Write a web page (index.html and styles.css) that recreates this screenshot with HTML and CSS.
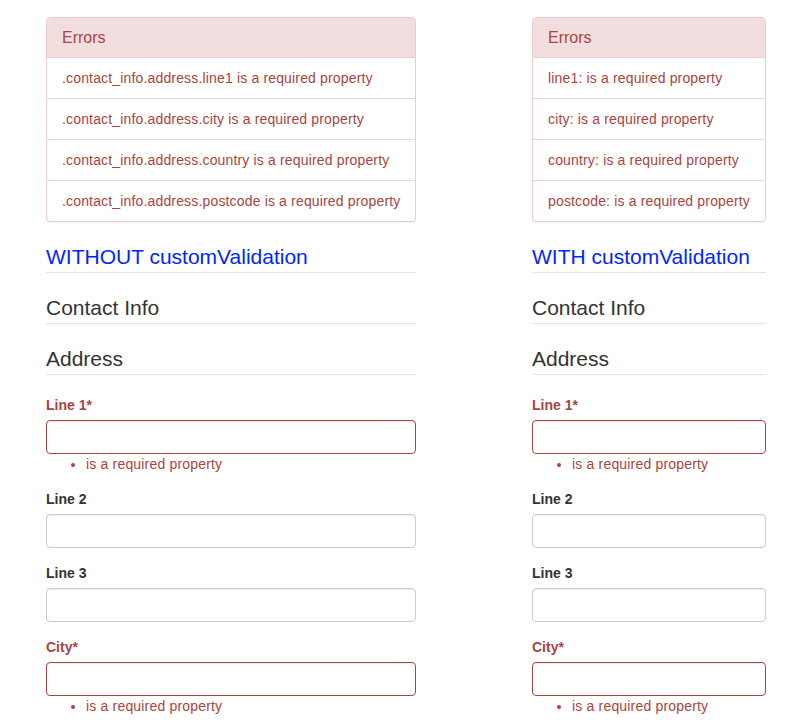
FILE: index.html
```html
<!DOCTYPE html>
<html>
<head>
<meta charset="utf-8">
<link rel="stylesheet" href="styles.css">
</head>
<body>
<div class="page">
  <div class="col col-left">
    <div class="panel">
      <div class="panel-heading">Errors</div>
      <ul class="list-group">
        <li class="list-group-item">.contact_info.address.line1 is a required property</li>
        <li class="list-group-item">.contact_info.address.city is a required property</li>
        <li class="list-group-item">.contact_info.address.country is a required property</li>
        <li class="list-group-item">.contact_info.address.postcode is a required property</li>
      </ul>
    </div>
    <div class="legend legend-blue">WITHOUT customValidation</div>
    <div class="legend">Contact Info</div>
    <div class="legend">Address</div>
    <div class="form-group has-error">
      <label class="control-label">Line 1*</label>
      <input class="form-control" type="text">
      <ul class="error-list"><li>is a required property</li></ul>
    </div>
    <div class="form-group">
      <label class="control-label">Line 2</label>
      <input class="form-control" type="text">
    </div>
    <div class="form-group">
      <label class="control-label">Line 3</label>
      <input class="form-control" type="text">
    </div>
    <div class="form-group has-error">
      <label class="control-label">City*</label>
      <input class="form-control" type="text">
      <ul class="error-list"><li>is a required property</li></ul>
    </div>
  </div>
  <div class="col col-right">
    <div class="panel">
      <div class="panel-heading">Errors</div>
      <ul class="list-group">
        <li class="list-group-item">line1: is a required property</li>
        <li class="list-group-item">city: is a required property</li>
        <li class="list-group-item">country: is a required property</li>
        <li class="list-group-item">postcode: is a required property</li>
      </ul>
    </div>
    <div class="legend legend-blue">WITH customValidation</div>
    <div class="legend">Contact Info</div>
    <div class="legend">Address</div>
    <div class="form-group has-error">
      <label class="control-label">Line 1*</label>
      <input class="form-control" type="text">
      <ul class="error-list"><li>is a required property</li></ul>
    </div>
    <div class="form-group">
      <label class="control-label">Line 2</label>
      <input class="form-control" type="text">
    </div>
    <div class="form-group">
      <label class="control-label">Line 3</label>
      <input class="form-control" type="text">
    </div>
    <div class="form-group has-error">
      <label class="control-label">City*</label>
      <input class="form-control" type="text">
      <ul class="error-list"><li>is a required property</li></ul>
    </div>
  </div>
</div>
</body>
</html>
```
FILE: styles.css
```css
* { box-sizing: border-box; }
html, body { margin: 0; padding: 0; background: #fff; }
body {
  font-family: "Liberation Sans", Arial, sans-serif;
  font-size: 14px;
  line-height: 20px;
  color: #333;
  overflow: hidden;
}
.page {
  display: grid;
  grid-template-columns: 370px 234px;
  column-gap: 116px;
  padding: 17px 0 0 46px;
}
.col { display: flex; flex-direction: column; }

.panel {
  border: 1px solid #ebccd1;
  border-radius: 4px;
  box-shadow: 0 1px 1px rgba(0,0,0,.05);
  margin-bottom: 20px;
  background: #fff;
}
.panel-heading {
  background: #f2dede;
  color: #a94442;
  border-bottom: 1px solid #ebccd1;
  border-radius: 3px 3px 0 0;
  padding: 10px 15px;
  font-size: 16px;
  line-height: 19px;
}
.list-group { list-style: none; margin: 0; padding: 0; }
.list-group-item {
  padding: 10px 15px;
  border-top: 1px solid #ddd;
  color: #a94442;
  line-height: 20px;
  white-space: nowrap;
  letter-spacing: 0.16px;
}
.list-group-item:first-child { border-top: 0; }

.legend {
  font-size: 21px;
  line-height: 30px;
  color: #333;
  border-bottom: 1px solid #e5e5e5;
  margin-bottom: 20px;
}
.legend-blue { color: #0026ff; }

.form-group { display: flex; flex-direction: column; margin-bottom: 15px; }
.control-label {
  font-weight: bold;
  margin-bottom: 5px;
  line-height: 20px;
  color: #333;
}
.form-control {
  height: 34px;
  width: 100%;
  border: 1px solid #ccc;
  border-radius: 4px;
  padding: 6px 12px;
  font: inherit;
  box-shadow: inset 0 1px 1px rgba(0,0,0,.075);
  background: #fff;
}
.has-error .control-label { color: #a94442; }
.has-error .form-control { border-color: #a94442; }
.error-list {
  margin: 0;
  padding-left: 40px;
  color: #a94442;
  line-height: 20px;
  letter-spacing: 0.18px;
}
```
